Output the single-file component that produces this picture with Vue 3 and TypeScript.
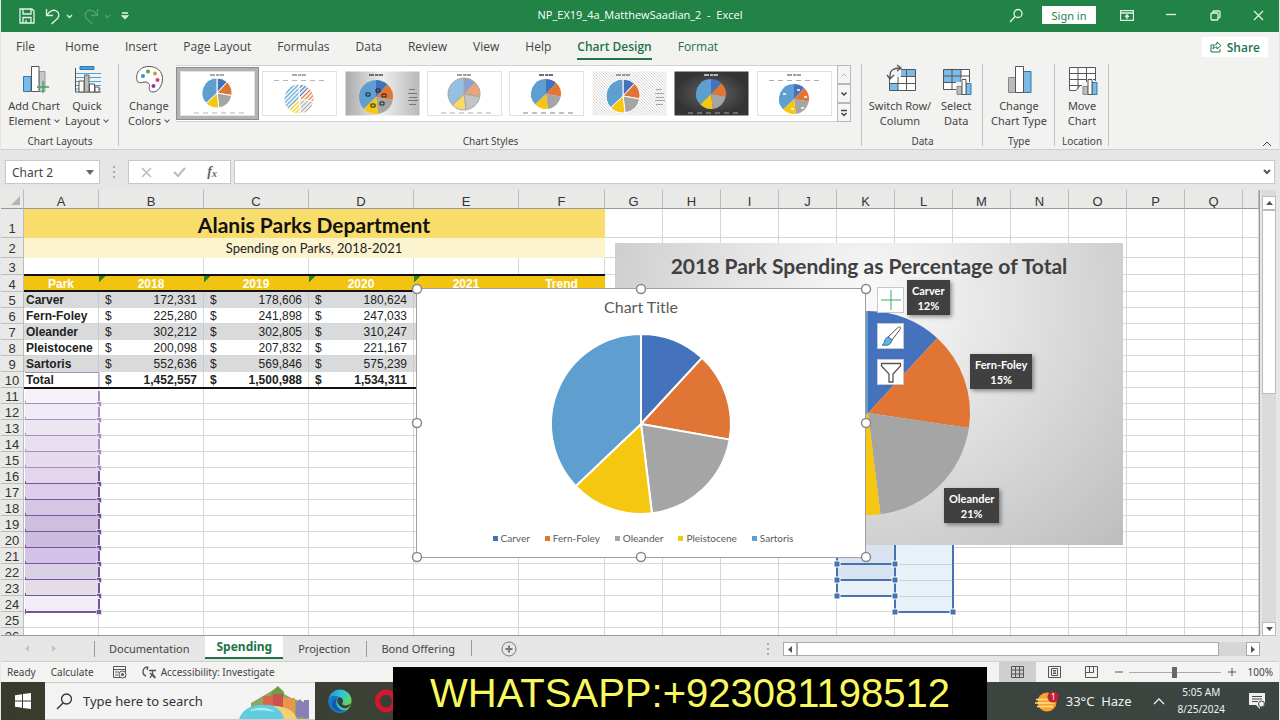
<script setup lang="ts">
import { ref } from 'vue'

interface Slice { path: string; color: string }

const palette = ['#4472bc', '#e07535', '#a5a5a5', '#f5c711', '#5e9fcf']

function sector(cx: number, cy: number, r: number, from: number, to: number): string {
  const point = (deg: number): string => {
    const a = ((deg - 90) * Math.PI) / 180
    return `${(cx + r * Math.cos(a)).toFixed(2)} ${(cy + r * Math.sin(a)).toFixed(2)}`
  }
  return `M${cx} ${cy}L${point(from)}A${r} ${r} 0 ${to - from > 180 ? 1 : 0} 1 ${point(to)}Z`
}

function pie(cx: number, cy: number, r: number, stops: number[], colors: string[] = palette): Slice[] {
  return colors.map((color, i) => ({ color, path: sector(cx, cy, r, stops[i], stops[i + 1]) }))
}

const stops = [0, 42.7, 100, 173, 226.4, 360]
const frontPie = pie(224, 135, 90, stops)
const backPie = pie(253, 170, 102, [0, 42.7, 98.5, 173, 223, 360])

const menuTabs = ['File', 'Home', 'Insert', 'Page Layout', 'Formulas', 'Data', 'Review', 'View', 'Help', 'Chart Design', 'Format']
const activeTab = ref('Chart Design')

interface Style {
  name: string
  kind: string
  cx: number
  cy: number
  r: number
  bg: string
  ink: string
  edge: string
  legend: 'bottom' | 'right' | 'top'
}
const galleryStyles: Style[] = [
  { name: 'Style 1', kind: 'plain', cx: 37, cy: 22, r: 15, bg: '#fff', ink: '#888', edge: '#fff', legend: 'bottom' },
  { name: 'Style 2', kind: 'hatch', cx: 37, cy: 28, r: 15, bg: '#fff', ink: '#888', edge: '#fff', legend: 'top' },
  { name: 'Style 3', kind: 'labels', cx: 31, cy: 26, r: 17, bg: 'url(#metal)', ink: '#444', edge: 'none', legend: 'right' },
  { name: 'Style 4', kind: 'soft', cx: 37, cy: 23, r: 16, bg: '#fff', ink: '#777', edge: '#777', legend: 'bottom' },
  { name: 'Style 5', kind: 'plain', cx: 37, cy: 23, r: 15, bg: '#fff', ink: '#333', edge: 'none', legend: 'bottom' },
  { name: 'Style 6', kind: 'pattern', cx: 31, cy: 25, r: 17, bg: 'url(#diag)', ink: '#777', edge: '#fff', legend: 'right' },
  { name: 'Style 7', kind: 'plain', cx: 37, cy: 23, r: 15, bg: 'url(#night)', ink: '#eee', edge: 'none', legend: 'bottom' },
  { name: 'Style 8', kind: 'dots', cx: 37, cy: 28, r: 15, bg: '#fff', ink: '#777', edge: 'none', legend: 'top' },
]

const columns = ['A', 'B', 'C', 'D', 'E', 'F', 'G', 'H', 'I', 'J', 'K', 'L', 'M', 'N', 'O', 'P', 'Q', '']
const headings = ['2018', '2019', '2020', '2021']
const parks = [
  { name: 'Carver', values: ['172,331', '178,606', '180,624'] },
  { name: 'Fern-Foley', values: ['225,280', '241,898', '247,033'] },
  { name: 'Oleander', values: ['302,212', '302,805', '310,247'] },
  { name: 'Pleistocene', values: ['200,098', '207,832', '221,167'] },
  { name: 'Sartoris', values: ['552,636', '569,846', '575,239'] },
  { name: 'Total', values: ['1,452,557', '1,500,988', '1,534,311'] },
]
const emptyRows = Array.from({ length: 16 }, (_, i) => i + 11)

const bands = ['#f6f1fb', '#f1ebf7', '#ece6f2', '#e8e0ee', '#e6daee', '#e4d5ee', '#dccdea', '#d5c6e6', '#cdbfdd', '#ccbcdf', '#d3c3e8', '#d9d0e6', '#e4dde8', '#f2ecf9']
  .map((fill, i) => ({ fill, y: 198 + i * 16, line: i < 5 ? '#a58fbf' : '#75569c' }))

const legend = ['Carver', 'Fern-Foley', 'Oleander', 'Pleistocene', 'Sartoris']
const handles = [[0, 0], [224, 0], [449, 0], [0, 134], [449, 134], [0, 268], [224, 268], [449, 268]]
const sheets = ['Documentation', 'Spending', 'Projection', 'Bond Offering']
const activeSheet = ref('Spending')
const nameBox = ref('Chart 2')
const formula = ref('')
const zoom = ref(50)
const query = ref('')
</script>

<template>
  <div class="app">
    <header class="titlebar">
      <div class="quick">
        <button aria-label="Save"><svg width="16" height="16" viewBox="0 0 16 16"><path d="M1 1h12l2 2v12H1zM4 1v5h8V1M4 15V9.500h8V15M7 15v-3" /></svg></button>
        <button aria-label="Undo"><svg width="16" height="17" viewBox="0 0 16 17"><path d="M1.500 1v6.500H8M2 7C5 2 9 1.500 11.500 3c3 2 3 5 1 7.500L6.500 16" /></svg></button>
        <button aria-label="Undo list"><svg width="7" height="5" viewBox="0 0 7 5"><path d="M1 1l2.500 2.500L6 1" /></svg></button>
        <button class="faded" aria-label="Redo"><svg width="16" height="17" viewBox="0 0 16 17"><path d="M14.500 1v6.500H8M14 7C11 2 7 1.500 4.500 3c-3 2-3 5-1 7.500L9.500 16" /></svg></button>
        <button class="faded" aria-label="Redo list"><svg width="7" height="5" viewBox="0 0 7 5"><path d="M1 1l2.500 2.500L6 1" /></svg></button>
        <button aria-label="Customize toolbar"><svg width="8" height="8" viewBox="0 0 8 8"><path d="M1 1h6M1.500 4L4 6.500 6.500 4z" /></svg></button>
      </div>
      <h1>NP_EX19_4a_MatthewSaadian_2&nbsp; -&nbsp; Excel</h1>
      <div class="window">
        <button aria-label="Search"><svg width="15" height="15" viewBox="0 0 15 15"><circle cx="9" cy="5.500" r="4" /><path d="M6 8.500L1 14" /></svg></button>
        <button class="signin">Sign in</button>
        <button aria-label="Ribbon display"><svg width="14" height="11" viewBox="0 0 14 11"><path d="M.5.5h13v10H.5zM.5 3h13M7 9V5M5 7l2-2 2 2" /></svg></button>
        <button aria-label="Minimize"><svg width="10" height="10" viewBox="0 0 10 10"><path d="M0 4.500h10" /></svg></button>
        <button aria-label="Restore"><svg width="11" height="11" viewBox="0 0 11 11"><rect x="1" y="3" width="7" height="7" rx="1" /><path d="M3 3V1.500C3 1 3.500 1 4 1h5c.7 0 1 .3 1 1v5c0 .7-.3 1-2 1" /></svg></button>
        <button aria-label="Close"><svg width="11" height="11" viewBox="0 0 11 11"><path d="M1 1l9 9M10 1l-9 9" /></svg></button>
      </div>
    </header>

    <nav class="menu" aria-label="Ribbon tabs">
      <button v-for="t in menuTabs" :key="t" :class="{ contextual: t === 'Chart Design' || t === 'Format', active: t === activeTab }" @click="activeTab = t">{{ t }}</button>
      <button class="share"><svg width="12" height="12" viewBox="0 0 12 12"><path d="M4 4H1v7h9V8M7 1l4 3.500L7 8V6C5 6 4 6.500 3 8c0-3 2-5 4-5z" /></svg>Share</button>
    </nav>

    <section class="ribbon">
      <div class="group layouts">
        <div class="tools">
          <button class="tool">
            <svg width="32" height="31" viewBox="0 0 32 31"><path d="M5.500 12.500H13v15H5.500z" fill="#7cbbe6" stroke="#3477ad" /><path d="M21 7.500h6v20h-6z" fill="#c8c8c8" stroke="#999" /><path d="M13.500 2.500h7.500v25h-7.500z" fill="#fff" stroke="#555" /><path d="M25 17v12M19 23h12" stroke="#3ea55d" stroke-width="1.500" /></svg>
            <span>Add Chart<br>Element <i class="caret"></i></span>
          </button>
          <button class="tool">
            <svg width="32" height="31" viewBox="0 0 32 31"><path d="M9 2.500h14v3H9z" fill="#4da0d8" stroke="#3477ad" /><path d="M4.500 4v24H30" fill="none" stroke="#555" /><path d="M5 9.500h25M5 13.500h25M5 17.500h25M5 21.500h25M5 25h25" stroke="#4da0d8" /><path d="M8 17h5v11H8zM18.500 20h5v8h-5zM24 23h4v5h-4z" fill="#fff" stroke="#555" /><path d="M13.500 11h4.500v17h-4.500z" fill="#bbb" stroke="#666" /></svg>
            <span>Quick<br>Layout <i class="caret"></i></span>
          </button>
        </div>
        <h2>Chart Layouts</h2>
      </div>

      <div class="group styles">
        <div class="tools">
          <button class="tool">
            <svg width="32" height="31" viewBox="0 0 32 31"><path d="M16 2.500c8 0 13.500 5 13.500 12S25 28 20 28c-4 0-4-3-3.500-5.500S15 18 12 18s-4.500 1.500-7 0C2 15 3 2.500 16 2.500z" fill="#fff" stroke="#555" /><circle cx="10" cy="12" r="2" fill="#3d8fc9" /><circle cx="15" cy="7.500" r="2" fill="#5da04d" /><circle cx="22" cy="9.500" r="2" fill="#d99a28" /><circle cx="24.500" cy="16" r="2" fill="#d9397f" /><circle cx="20.500" cy="22" r="2" fill="#8b3ba8" /></svg>
            <span>Change<br>Colors <i class="caret"></i></span>
          </button>
          <div class="gallery">
            <button v-for="(s, i) in galleryStyles" :key="s.name" class="thumb" :class="{ selected: i === 0 }" :aria-label="s.name">
              <svg width="75" height="45" viewBox="0 0 75 45">
                <defs>
                  <linearGradient id="metal"><stop offset="0" stop-color="#aaa" /><stop offset=".5" stop-color="#eee" /><stop offset="1" stop-color="#b8b8b8" /></linearGradient>
                  <radialGradient id="night"><stop offset="0" stop-color="#666" /><stop offset="1" stop-color="#333" /></radialGradient>
                  <pattern id="diag" width="3" height="3" patternUnits="userSpaceOnUse"><path d="M0 0h3v3H0z" fill="#fafafa" /><path d="M0 0l3 3" stroke="#ccc" stroke-width=".7" /></pattern>
                  <pattern id="hatching" width="3" height="3" patternUnits="userSpaceOnUse" patternTransform="rotate(45)"><path d="M1 0v3" stroke="#fff" stroke-width="1.700" /></pattern>
                </defs>
                <rect x=".5" y=".5" width="74" height="44" :fill="s.bg" :stroke="s.bg === '#fff' ? '#e2e2e2' : 'none'" />
                <g :opacity="s.kind === 'soft' ? 0.65 : 1">
                  <path v-for="p in pie(s.cx, s.cy, s.r, stops)" :key="p.color" :d="p.path" :fill="p.color" :stroke="s.edge" stroke-width="1" />
                </g>
                <circle v-if="s.kind === 'hatch'" :cx="s.cx" :cy="s.cy" r="16" fill="url(#hatching)" />
                <g v-if="s.kind === 'labels'" fill="none" stroke="#222"><path d="M21 22h4v3h-4zM31 18h4v3h-4zM37 23h4v3h-4zM26 33h4v3h-4zM35 31h4v3h-4z" /></g>
                <g v-if="s.kind === 'dots'" stroke="#fff" stroke-width="1.500"><path d="M26 23h3M40 19h3M47 26h3M44 37h3M34 38h3" /></g>
                <path :d="`M${s.cx - 7} 4h14`" :stroke="s.ink" stroke-width="2" stroke-dasharray="5 1 3 .5" opacity=".7" />
                <g opacity=".6">
                  <path v-if="s.legend === 'bottom'" d="M14 42h50" :stroke="s.ink" stroke-dasharray="5 4" />
                  <path v-if="s.legend === 'top'" d="M12 9.500h51" :stroke="s.ink" stroke-dasharray="5 4" />
                  <path v-if="s.legend === 'right'" d="M64 18.500h6M63 22.500h9M64 26.500h8M63 29.500h10M64 33.500h7" :stroke="s.ink" />
                </g>
              </svg>
            </button>
          </div>
          <div class="spin">
            <button aria-label="Previous styles"><svg width="8" height="6" viewBox="0 0 8 6"><path d="M1.500 4.500L4 2l2.500 2.500" stroke="#bbb" /></svg></button>
            <button aria-label="Next styles"><svg width="8" height="6" viewBox="0 0 8 6"><path d="M1.500 1.500L4 4l2.500-2.500" stroke="#444" stroke-width="1.500" /></svg></button>
            <button aria-label="All styles"><svg width="8" height="8" viewBox="0 0 8 8"><path d="M1 1.500h6M1.500 4L4 6.500 6.500 4" stroke="#444" stroke-width="1.500" /></svg></button>
          </div>
        </div>
        <h2>Chart Styles</h2>
      </div>

      <div class="group data">
        <div class="tools">
          <button class="tool">
            <svg width="32" height="31" viewBox="0 0 32 31"><path d="M5.500 5.500h26v21h-26z" fill="#fff" /><path d="M14 5.500h17.500v7H14zM5.500 19.500H14v7H5.500z" fill="#7cbbe6" /><path d="M5.500 5.500h26v21h-26zM5.500 12.500h26M5.500 19.500h26M14 5.500v21M22.500 5.500v21" fill="none" stroke="#555" /><path d="M3 1h14v12H3z" fill="#f2f2f0" /><path d="M6 15V11c0-4 3-7 10-7M13 1l4 3-4 3M3 11l3 4 4-4" fill="none" stroke="#555" stroke-width="1.300" /></svg>
            <span>Switch Row/<br>Column</span>
          </button>
          <button class="tool">
            <svg width="32" height="31" viewBox="0 0 32 31"><path d="M3.500 5.500h26v20h-26z" fill="#fff" /><path d="M3.500 5.500H21v13H3.500z" fill="#7cbbe6" /><path d="M3.500 5.500h26v20h-26zM3.500 12h26M3.500 18.500h26M12 5.500v20M21 5.500v20" fill="none" stroke="#555" /><path d="M16 18h5v-4h6v4h5v13H16z" fill="#f2f2f0" /><path d="M17 22.500h5v8h-5z" fill="#bbb" stroke="#888" /><path d="M26 19.500h5v11h-5z" fill="#7cbbe6" stroke="#3477ad" /><path d="M22 15.500h4v15h-4z" fill="#fff" stroke="#555" /></svg>
            <span>Select<br>Data</span>
          </button>
        </div>
        <h2>Data</h2>
      </div>

      <div class="group type">
        <div class="tools">
          <button class="tool">
            <svg width="32" height="31" viewBox="0 0 32 31"><path d="M5.500 13.500H13v15H5.500z" fill="#bbb" stroke="#888" /><path d="M20 7.500h8v21h-8z" fill="#7cbbe6" stroke="#3477ad" /><path d="M12.500 2.500h8v26h-8z" fill="#fff" stroke="#555" /></svg>
            <span>Change<br>Chart Type</span>
          </button>
        </div>
        <h2>Type</h2>
      </div>

      <div class="group place">
        <div class="tools">
          <button class="tool">
            <svg width="32" height="31" viewBox="0 0 32 31"><path d="M3.500 3.500h26v18H14l-4 5H3.500z" fill="#fff" stroke="#555" /><path d="M3.500 9.500h26M3.500 15.500h26M3.500 21.500h26M12 3.500v21M20.500 3.500v18" fill="none" stroke="#555" /><path d="M16 18h5v-4h6v3h5v14H16z" fill="#f2f2f0" /><path d="M17 22.500h5v8h-5z" fill="#bbb" stroke="#888" /><path d="M26 18.500h5v12h-5z" fill="#7cbbe6" stroke="#3477ad" /><path d="M22 15.500h4v15h-4z" fill="#fff" stroke="#555" /></svg>
            <span>Move<br>Chart</span>
          </button>
        </div>
        <h2>Location</h2>
      </div>
      <button class="collapse" aria-label="Collapse ribbon"><svg width="10" height="7" viewBox="0 0 10 7"><path d="M1 6l4-4 4 4" /></svg></button>
    </section>

    <section class="formula">
      <div class="namebox">
        <input v-model="nameBox" aria-label="Name box">
        <button aria-label="Names"><svg width="8" height="5" viewBox="0 0 8 5"><path d="M0 0h8L4 5z" fill="#666" /></svg></button>
      </div>
      <span class="grip"></span>
      <div class="actions">
        <button aria-label="Cancel"><svg width="11" height="11" viewBox="0 0 11 11"><path d="M1 1l9 9M10 1l-9 9" /></svg></button>
        <button aria-label="Enter"><svg width="13" height="10" viewBox="0 0 13 10"><path d="M1 5l4 4 7-8" stroke-width="2" /></svg></button>
        <button class="fx" aria-label="Insert function">f<small>x</small></button>
      </div>
      <div class="entry">
        <input v-model="formula" aria-label="Formula">
        <button aria-label="Expand formula bar"><svg width="8" height="6" viewBox="0 0 8 6"><path d="M1 1l3 3 3-3" stroke="#555" stroke-width="2" fill="none" /></svg></button>
      </div>
    </section>

    <main class="workspace">
      <div class="sheet">
        <table>
          <colgroup>
            <col class="w-head"><col class="w-a"><col v-for="n in 4" :key="n" class="w-b"><col class="w-f"><col v-for="n in 11" :key="n" class="w-g"><col>
          </colgroup>
          <thead>
            <tr>
              <th class="corner"><svg width="9" height="9" viewBox="0 0 9 9"><path d="M9 0v9H0z" fill="#b5b5b5" /></svg></th>
              <th v-for="c in columns" :key="c" scope="col">{{ c }}</th>
            </tr>
          </thead>
          <tbody>
            <tr class="r1"><th scope="row">1</th><td colspan="6" class="title">Alanis Parks Department</td><td v-for="n in 12" :key="n"></td></tr>
            <tr class="r2"><th scope="row">2</th><td colspan="6" class="subtitle">Spending on Parks, 2018-2021</td><td v-for="n in 12" :key="n"></td></tr>
            <tr class="r3"><th scope="row">3</th><td v-for="n in 18" :key="n"></td></tr>
            <tr class="r4">
              <th scope="row">4</th><td class="head">Park</td>
              <td v-for="h in headings" :key="h" class="head flag">{{ h }}</td>
              <td class="head">Trend</td><td v-for="n in 12" :key="n"></td>
            </tr>
            <tr v-for="(p, i) in parks" :key="p.name" :class="{ stripe: i % 2 === 0 && i < 5, total: i === 5 }">
              <th scope="row">{{ i + 5 }}</th><td class="park fill">{{ p.name }}</td>
              <td v-for="v in p.values" :key="v" class="fill"><div class="money"><span>$</span><span>{{ v }}</span></div></td>
              <td class="fill"></td><td v-for="n in 13" :key="n"></td>
            </tr>
            <tr v-for="r in emptyRows" :key="r"><th scope="row">{{ r }}</th><td v-for="n in 18" :key="n"></td></tr>
          </tbody>
        </table>

        <svg class="ranges" width="960" height="430" viewBox="0 0 960 430">
          <g v-for="b in bands" :key="b.y">
            <rect x="24" :y="b.y" width="74" height="16" :fill="b.fill" />
            <path :d="`M24 ${b.y + 16}h74`" :stroke="b.line" stroke-width="2" />
            <path :d="`M98 ${b.y + 3}v10`" :stroke="b.line" stroke-width="2" />
            <rect x="95.500" :y="b.y + 13.500" width="5" height="5" :fill="b.line" stroke="#fff" stroke-width=".5" />
            <path :d="`M24.500 ${b.y + 13}v5`" :stroke="b.line" />
          </g>
          <path d="M24 182.500h74v16" fill="none" stroke="#a58fbf" />
          <path d="M23 85h581M23 101h581M23 198h393" stroke="#111" stroke-width="2" />
          <rect x="836" y="340" width="58" height="50" fill="#d9e2f1" /><rect x="836" y="390" width="58" height="16" fill="#eaf1f8" />
          <rect x="894" y="340" width="58" height="82" fill="#e8f1f8" />
          <path d="M894 374.500h58M894 390.500h58M894 406.500h58" stroke="#c9d1d8" />
          <path d="M836 350v56h58M836 374h58M836 390h58M894 340v82h58V340" fill="none" stroke="#4473ae" stroke-width="2" />
          <g fill="#4473ae" stroke="#fff"><rect v-for="p in [[836,374],[836,390],[836,406],[894,374],[894,390],[894,406],[894,422],[952,422]]" :key="p.join()" :x="p[0] - 3" :y="p[1] - 3" width="6" height="6" /></g>
        </svg>

        <figure class="chart back">
          <figcaption>2018 Park Spending as Percentage of Total</figcaption>
          <svg width="508" height="302" viewBox="0 0 508 302"><path v-for="p in backPie" :key="p.color" :d="p.path" :fill="p.color" /></svg>
          <span class="tag carver">Carver<br>12%</span><span class="tag fern">Fern-Foley<br>15%</span><span class="tag olea">Oleander<br>21%</span>
        </figure>

        <figure class="chart front">
          <figcaption>Chart Title</figcaption>
          <svg width="449" height="268" viewBox="0 0 449 268"><path v-for="p in frontPie" :key="p.color" :d="p.path" :fill="p.color" stroke="#fff" stroke-width="2" stroke-linejoin="round" /></svg>
          <ul><li v-for="(l, i) in legend" :key="l"><b :style="{ background: palette[i] }"></b>{{ l }}</li></ul>
          <svg class="handles" width="461" height="280" viewBox="-6 -6 461 280"><circle v-for="p in handles" :key="p.join()" :cx="p[0]" :cy="p[1]" r="4.500" /></svg>
        </figure>

        <div class="chart-tools">
          <button aria-label="Chart elements"><svg width="24" height="24" viewBox="0 0 24 24"><path d="M12 2v20M2 12h20" stroke="#3da864" /></svg></button>
          <button aria-label="Chart styling"><svg width="24" height="24" viewBox="0 0 24 24"><path d="M9 13L19 3.500c2-1.500 3.500 0 2 2L13 16z" fill="#fff" stroke="#555" /><path d="M9 13l4 3c-1 5-5 6-10 5 3-1 2-7 6-8z" fill="#62b4e0" stroke="#33749e" /></svg></button>
          <button aria-label="Chart filters"><svg width="24" height="24" viewBox="0 0 24 24"><path d="M2.500 3.500h19v2.500L14 14v8h-4v-8L2.500 6z" fill="#fff" stroke="#555" stroke-width="1.300" /></svg></button>
        </div>
      </div>
      <div class="vscroll">
        <button aria-label="Scroll up"><svg width="7" height="4" viewBox="0 0 7 4"><path d="M0 4h7L3.500 0z" /></svg></button>
        <span class="bar"></span>
        <button aria-label="Scroll down"><svg width="7" height="4" viewBox="0 0 7 4"><path d="M0 0h7L3.500 4z" /></svg></button>
      </div>
    </main>

    <nav class="sheets" aria-label="Sheets">
      <div class="nav">
        <button aria-label="Previous sheet"><svg width="4" height="7" viewBox="0 0 4 7"><path d="M4 0v7L0 3.500z" fill="#c4c4c4" /></svg></button>
        <button aria-label="Next sheet"><svg width="4" height="7" viewBox="0 0 4 7"><path d="M0 0v7l4-3.500z" fill="#c4c4c4" /></svg></button>
      </div>
      <button v-for="s in sheets" :key="s" class="tab" :class="{ active: s === activeSheet }" @click="activeSheet = s">{{ s }}</button>
      <button class="add" aria-label="New sheet"><svg width="16" height="16" viewBox="0 0 16 16"><circle cx="8" cy="8" r="7" /><path d="M8 4.500v7M4.500 8h7" stroke-width="2" /></svg></button>
      <span class="grip"></span>
      <div class="hscroll">
        <button aria-label="Scroll left"><svg width="4" height="7" viewBox="0 0 4 7"><path d="M4 0v7L0 3.500z" /></svg></button>
        <span class="bar"></span>
        <button aria-label="Scroll right"><svg width="4" height="7" viewBox="0 0 4 7"><path d="M0 0v7l4-3.500z" /></svg></button>
      </div>
    </nav>

    <footer class="status">
      <span class="ready">Ready</span><span>Calculate</span>
      <svg class="macro" width="14" height="13" viewBox="0 0 14 13"><path d="M.5.5h12v11H.5zM.5 3.500h12M2 6h4M2 9h3" fill="none" stroke="#555" /><circle cx="9.500" cy="8.500" r="3.500" fill="#f2f2f0" stroke="#555" /><circle cx="9.500" cy="8.500" r="1.500" fill="#555" /></svg>
      <svg class="access" width="15" height="13" viewBox="0 0 15 13"><path d="M6 1C2 1 1 4 1 6s1 3.500 3 4M6 1l-1 3M7 4.500h7M10.500 5v3L8 12M10.500 8l3 4M8 7l5 5" fill="none" stroke="#555" stroke-width="1.300" /></svg>
      <span>Accessibility: Investigate</span>
      <div class="views">
        <button class="on" aria-label="Normal view"><svg width="13" height="12" viewBox="0 0 13 12"><path d="M.5.5h12v11H.5zM.5 4h12M.5 8h12M4.500.5v11M8.500.5v11" /></svg></button>
        <button aria-label="Page layout view"><svg width="13" height="12" viewBox="0 0 13 12"><path d="M.5.5h12v11H.5zM3.500 2.500h6v7h-6zM5 4.500h3M5 6h3M5 7.500h3" /></svg></button>
        <button aria-label="Page break view"><svg width="13" height="12" viewBox="0 0 13 12"><path d="M.5.5h12v11H.5zM4.500.5v6h4v-6M.5 6.500h4" /></svg></button>
      </div>
      <button class="step" aria-label="Zoom out"><svg width="8" height="8" viewBox="0 0 8 8"><path d="M0 4h8" /></svg></button>
      <input v-model="zoom" type="range" min="0" max="100" aria-label="Zoom">
      <button class="step" aria-label="Zoom in"><svg width="8" height="8" viewBox="0 0 8 8"><path d="M0 4h8M4 0v8" /></svg></button>
      <span class="percent">100%</span>
    </footer>

    <footer class="taskbar">
      <button class="start" aria-label="Start"><svg width="16" height="16" viewBox="0 0 16 16"><path d="M0 2.300L7 1.300v6.200H0zM8 1.100L16 0v7.500H8zM0 8.500h7v6.200l-7-1zM8 8.500h8V16l-8-1.100z" fill="#fff" /></svg></button>
      <label class="search">
        <svg width="17" height="17" viewBox="0 0 17 17"><circle cx="10.500" cy="6" r="5" fill="none" stroke="#333" stroke-width="1.300" /><path d="M7 10L1 16" stroke="#333" stroke-width="1.500" /></svg>
        <input v-model="query" aria-label="Search" placeholder="Type here to search">
        <svg width="72" height="34" viewBox="0 0 72 34"><path d="M12 18L36 4l18 10 16 4v16H12z" fill="#8aa860" /><path d="M33 6l6-5 6 6v4H32z" fill="#6e9f45" /><path d="M24 11h20v18H24z" fill="#d9664f" /><path d="M44 13h12v18H44z" fill="#e9944f" /><path d="M34 9h10v20H34z" fill="#c9524f" /><path d="M57 18l4-4 4 5v13h-8zM65 15h5v18h-5z" fill="#8b7fb8" /><path d="M0 34c4-12 17-15 29-14s22 2 28 14z" fill="#62cbe0" /><path d="M34 21c14 0 21 5 24 13H45c-1-6-5-10-11-13z" fill="#f6cf73" /><path d="M10 26c8-5 20-4 26 1-9-2-18-2-26-1z" fill="#a9ecf4" /></svg>
      </label>
      <button class="edge" aria-label="Edge"><svg width="24" height="24" viewBox="0 0 24 24"><defs><linearGradient id="sea" x1="0" y1="0" x2="1" y2=".4"><stop offset="0" stop-color="#2193d4" /><stop offset=".6" stop-color="#35c5d5" /><stop offset="1" stop-color="#69d556" /></linearGradient></defs><circle cx="12" cy="12" r="11.500" fill="url(#sea)" /><path d="M.5 12C1 6 7 6 11 8c-3 2-4 7 0 11s9 2 11-1c-3 5-9 7-14 5S0 17 .5 12z" fill="#1479c9" /><path d="M11 8c4 1 5 4 3 7 2 2 6 2 9-1-1 5-6 7-10 4s-5-7-2-10z" fill="#3a4034" /><path d="M9 10c-3 4 0 12 7 11-5 3-12 0-12-6 0-3 2-5 5-5z" fill="#155aa5" /></svg></button>
      <button class="opera" aria-label="Opera"><svg width="24" height="24" viewBox="0 0 24 24"><ellipse cx="12" cy="12" rx="8.500" ry="9" fill="none" stroke="#d5172e" stroke-width="5" /></svg></button>
      <div class="tray">
        <button class="weather"><svg width="24" height="22" viewBox="0 0 24 22"><circle cx="12" cy="12" r="9.500" fill="#f5a22f" /><path d="M1 9.500h17M0 13h19M2 16.500h16" stroke="#ffe18a" stroke-width="1.500" /><circle cx="18" cy="7" r="5.500" fill="#c41f32" /><text x="16" y="10">1</text></svg><span>33°C&nbsp; Haze</span></button>
        <button aria-label="Hidden icons"><svg width="12" height="8" viewBox="0 0 12 8"><path d="M1 7l5-5 5 5" fill="none" stroke="#eee" stroke-width="1.300" /></svg></button>
        <time datetime="2024-08-25T05:05">5:05 AM<br>8/25/2024</time>
        <button aria-label="Notifications"><svg width="16" height="16" viewBox="0 0 16 16"><path d="M0 0h16v12h-5v4l-4-4H0z" fill="#eee" /><path d="M3 3.500h10M3 6h10M3 8.500h6" stroke="#444c45" /><circle cx="12.500" cy="11" r="3" fill="#eee" stroke="#444c45" /></svg></button>
      </div>
      <strong class="banner">WHATSAPP:+923081198512</strong>
    </footer>
  </div>
</template>

<style>
body { background: #000; }
</style>

<style scoped>
* { box-sizing: border-box; }
.app { display: flex; flex-direction: column; height: 100vh; padding: 0 1px; overflow: hidden; font: 12px/15px "Noto Sans", "Open Sans", sans-serif; color: #444; background: #e6e6e6; }
button, input { margin: 0; padding: 0; border: 0; background: none; font: inherit; color: inherit; min-width: 0; }
button { display: flex; align-items: center; justify-content: center; flex: none; }
svg { display: block; flex: none; }

.titlebar { position: relative; display: flex; align-items: center; justify-content: space-between; height: 32px; flex: none; padding: 0 15px 2px 18px; background: #218346; color: #fff; }
.titlebar svg { fill: none; stroke: #e4f3e8; stroke-width: 1.3; }
.quick { display: flex; align-items: center; gap: 10px; padding-top: 2px; }
.quick button:nth-child(3), .quick button:nth-child(5) { margin-left: -5px; }
.quick .faded { opacity: .25; }
h1 { margin: 0; font: 400 11px/16px "Open Sans", "Noto Sans", sans-serif; position: absolute; left: 0; right: 0; text-align: center; pointer-events: none; }
.window { display: flex; align-items: center; gap: 38px; }
.window .signin { width: 54px; height: 18px; background: #fff; color: #218346; font-size: 11px; margin: 0 -14px 0 -20px; }
.window button:nth-child(3) { margin-right: -6px; }
.window button:nth-child(5) { margin: 0 -6px 0 -4px; }

.menu { display: flex; align-items: center; gap: 26px; height: 31px; flex: none; padding: 0 11px 1px 15px; background: #f2f2f0; font-family: "Open Sans", "Noto Sans", sans-serif; }
.menu button { height: 26px; border-bottom: 2px solid transparent; }
.menu button:first-child { margin-right: 4px; }
.menu .contextual { color: #217346; }
.menu .active { font-weight: 600; border-color: #217346; }
.menu .share { height: 20px; margin-left: auto; padding: 0 8px; gap: 5px; background: #fff; color: #217346; font-weight: 600; border: 0; }
.share svg { fill: none; stroke: #217346; }

.ribbon { display: flex; height: 87px; flex: none; padding-top: 1px; background: #f2f2f0; border-bottom: 1px solid #cfcfcf; }
.group { position: relative; display: flex; flex-direction: column; justify-content: space-between; flex: none; }
.group::after { content: ""; position: absolute; right: 0; top: 0; bottom: 3px; border-right: 1px solid #c2c2c2; }
.tools { display: flex; justify-content: center; }
.group h2 { margin: 0; font-size: 10px; line-height: 15px; font-weight: 400; text-align: center; }
.tool { flex-direction: column; font-size: 11px; line-height: 15px; text-align: center; gap: 3px; }
.caret { display: inline-block; width: 4px; height: 4px; border: solid #555; border-width: 0 1px 1px 0; transform: rotate(45deg); margin: 0 1px 3px; }
.layouts { width: 118px; }
.layouts .tools { gap: 5px; padding-right: 3px; }
.styles { width: 743px; }
.styles .tools { justify-content: flex-start; padding-left: 9px; }
.data { width: 121px; }
.data .tools { gap: 9px; padding-right: 4px; }
.type { width: 72px; }
.place { width: 54px; }
.gallery { display: flex; align-items: center; justify-content: space-between; width: 661px; height: 57px; margin: 1px 0 0 6px; padding: 0 5px 0 4px; background: #fff; border: solid #d2d2d2; border-width: 1px 0; }
.thumb { width: 75px; height: 45px; }
.thumb.selected { outline: 3px solid #b3b3b3; outline-offset: 0; box-shadow: 0 0 0 4px #8c8c8c; }
.spin { display: flex; flex-direction: column; width: 14px; height: 57px; margin-top: 1px; }
.spin button { flex: 1; border: 1px solid #b8b8b8; background: #f5f5f5; }
.spin svg, .collapse svg { fill: none; stroke: #444; }
.collapse { align-self: flex-end; margin-left: auto; padding: 0 7px 2px 0; }

.formula { display: flex; height: 40px; flex: none; padding: 10px 4px 6px; background: #e6e6e6; }
.formula > div { display: flex; align-items: center; background: #fff; border: 1px solid #c8c8c8; }
.namebox { width: 95px; padding: 0 5px 0 6px; }
.namebox input, .entry input { flex: 1; height: 20px; outline: 0; }
.grip { width: 2px; height: 12px; align-self: center; background: repeating-linear-gradient(#aaa 0 2px, transparent 2px 5px); }
.formula .grip { margin: 0 13px; }
.actions { width: 103px; justify-content: space-between; padding: 0 13px 0 12px; }
.actions svg { fill: none; stroke: #bbb; stroke-width: 1.5; }
.fx { font: italic 700 14px/18px "Liberation Serif", serif; color: #666; }
.fx small { font-size: 10px; padding-top: 4px; }
.entry { flex: 1; margin-left: 3px; padding: 0 3px 0 6px; }

.workspace { display: flex; flex: 1; min-height: 0; gap: 2px; padding-right: 3px; }
.sheet { position: relative; flex: 1; min-width: 0; overflow: hidden; background: #fff; border-right: 1px solid #999; border-bottom: 1px solid #999; }
table { width: 100%; table-layout: fixed; border-collapse: separate; border-spacing: 0; font: 12px/13px "Liberation Sans", Arial, sans-serif; color: #222; }
.w-head { width: 23px; } .w-a { width: 75px; } .w-b { width: 105px; } .w-f { width: 86px; } .w-g { width: 58px; }
td, th { height: 16px; padding: 2px 0 0; border: solid #d6d6d6; border-width: 0 1px 1px 0; white-space: nowrap; overflow: hidden; }
th { font-size: 13px; font-weight: 400; background: #e9e9e7; border-color: #bcbcbc; color: #333; }
thead th { height: 19px; line-height: 13px; border-bottom-color: #999; padding-top: 5px; }
thead .corner { padding: 3px 0 0 10px; }
.r1 > * { height: 29px; } .r2 > * { height: 20px; } .r3 > *, .r4 > * { height: 17px; }
.r1 > th { vertical-align: bottom; padding-bottom: 2px; }
.title { padding-top: 3px; background: #f8dd6c; border-color: #f8dd6c; font: 700 21px/25px Lato, "Open Sans", sans-serif; text-align: center; color: #111; }
.subtitle { background: #fcf3cf; border-color: #fcf3cf; font: 13px/17px Lato, "Open Sans", sans-serif; text-align: center; }
.head { background: #f2c411; border-right-color: #f2c411; color: #fff; font-weight: 700; text-align: center; }
.flag { background: linear-gradient(135deg, #228a22 5px, #f2c411 5px); }
.stripe .fill { background: #d9dadb; border-color: #d9dadb; border-right-color: #c8cacc; }
.park { font-weight: 700; padding-left: 2px; }
.money { display: flex; justify-content: space-between; padding: 0 6px; }
.total { font-weight: 700; }

.ranges { position: absolute; left: 0; top: 0; }
.chart { position: absolute; margin: 0; }
.chart figcaption { position: relative; text-align: center; font-family: Lato, "Open Sans", sans-serif; white-space: nowrap; }
.chart svg { position: absolute; left: 0; top: 0; }
.back { left: 614px; top: 53px; width: 508px; height: 302px; background: radial-gradient(ellipse at 50% 20%, #fafafa 0, #e3e3e3 40%, #bdbdbd 100%); }
.back figcaption { padding-top: 10px; font-size: 21px; line-height: 26px; font-weight: 700; color: #404040; }
.tag { position: absolute; padding: 3px 5px 2px; background: #404040; color: #fff; font: 700 11px/15px Lato, "Open Sans", sans-serif; text-align: center; box-shadow: 2px 2px 4px #0006; white-space: nowrap; }
.carver { left: 292px; top: 37px; } .fern { left: 355px; top: 111px; } .olea { left: 329px; top: 245px; }
.front { left: 415px; top: 98px; width: 450px; height: 270px; background: #fff; border: 1px solid #a0a0a0; }
.front figcaption { padding-top: 7px; font-size: 16px; line-height: 22px; color: #595959; }
.front .handles { left: -6px; top: -6px; }
.handles circle { fill: #fff; stroke: #888; stroke-width: 1.5; }
ul { position: absolute; left: 0; right: 0; bottom: 11px; display: flex; justify-content: center; gap: 15px; margin: 0; padding: 0 0 0 4px; list-style: none; font: 10px/15px Lato, "Open Sans", sans-serif; color: #595959; }
li { display: flex; align-items: center; gap: 3px; }
li b { width: 5px; height: 5px; }
.chart-tools { position: absolute; left: 876px; top: 97px; display: flex; flex-direction: column; gap: 10px; }
.chart-tools button { width: 27px; height: 26px; background: #fff; border: 1px solid #c8c8c8; }

.vscroll { display: flex; flex-direction: column; width: 14px; padding: 6px 0 0; background: #dadada; }
.vscroll button { height: 14px; background: #fff; border: 1px solid #bbb; }
.vscroll .bar { height: 184px; background: #fff; border: 1px solid #bbb; }
.vscroll button:last-child { margin-top: auto; }
.vscroll svg, .hscroll svg { fill: #555; }

.sheets { display: flex; height: 26px; flex: none; background: #e6e6e6; border-bottom: 1px solid #cfcfcf; padding-right: 19px; font-size: 11px; }
.nav { display: flex; width: 93px; padding: 0 38px 0 24px; justify-content: space-between; }
.tab { position: relative; height: 22px; margin-top: 1px; padding: 0 16px 0 15px; }
.tab:not(.active)::before, .add::before { content: ""; position: absolute; left: 0; top: 4px; height: 16px; border-left: 1px solid #999; }
.tab.active + .tab::before { border: 0; }
.tab.active { background: #fff; color: #217346; font-size: 12px; font-weight: 700; border-bottom: 2px solid #217346; margin-top: 0; height: 23px; padding: 0 11px; }
.add { position: relative; padding-left: 30px; }
.add svg { fill: none; stroke: #777; }
.sheets .grip { margin: 0 14px 0 auto; }
.hscroll { display: flex; width: 477px; height: 14px; margin-top: 6px; background: #d6d6d6; }
.hscroll button { width: 14px; background: #fff; border: 1px solid #aaa; }
.hscroll .bar { width: 422px; background: #fff; border: 1px solid #aaa; }
.hscroll button:last-child { margin-left: auto; }

.status { display: flex; align-items: center; height: 20px; flex: none; padding: 0 6px; background: #f3f3f2; font-size: 10px; }
.status .ready { margin-right: 15px; }
.macro { margin: 0 15px 0 19px; } .access { margin-right: 4px; }
.views { display: flex; margin-left: auto; height: 20px; }
.views button { width: 37px; }
.views .on { background: #cfcfcf; }
.views svg, .step svg { fill: none; stroke: #555; }
.step { margin-left: 5px; }
input[type="range"] { appearance: none; width: 92px; height: 12px; margin: 0 2px 0 6px; background: linear-gradient(#aaa, #aaa) center / 100% 1px no-repeat; }
input[type="range"]::-webkit-slider-thumb { appearance: none; width: 5px; height: 11px; background: #666; }
.percent { margin-left: 12px; }

.taskbar { position: relative; display: flex; align-items: center; height: 38px; flex: none; background: linear-gradient(90deg, #3a3b2c, #3b4035 30%, #3c4542); color: #f2f2f2; }
.start { width: 44px; height: 38px; }
.search { display: flex; align-items: center; width: 270px; height: 38px; padding: 0 4px 0 11px; gap: 10px; background: #f3f3f3; border: 1px solid #ccc; border-width: 1px 0; }
.search svg:last-child { align-self: flex-end; }
.search input { flex: 1; font-size: 13px; line-height: 20px; height: 24px; outline: 0; color: #333; }
.search input::placeholder { color: #333; opacity: 1; }
.edge { margin-left: 13px; } .opera { margin-left: 22px; }
.tray { display: flex; align-items: center; margin-left: auto; padding-right: 14px; gap: 19px; }
.weather { gap: 7px; font-size: 13px; margin-right: 2px; }
.weather text { font-size: 8px; fill: #fff; }
time { font-size: 10px; line-height: 17px; text-align: center; margin: 0 5px 0 -6px; }
.banner { position: absolute; left: 392px; bottom: 0; width: 594px; height: 53px; background: #000; color: #f8f861; font: 400 40px/53px "Liberation Sans", Arial, sans-serif; text-align: center; white-space: nowrap; }
</style>
